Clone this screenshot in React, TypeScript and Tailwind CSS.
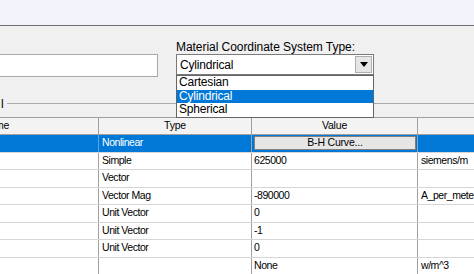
import React from "react";

const rows = [
  { type: "Nonlinear", value: "", unit: "", selected: true },
  { type: "Simple", value: "625000", unit: "siemens/m" },
  { type: "Vector", value: "", unit: "" },
  { type: "Vector Mag", value: "-890000", unit: "A_per_meter" },
  { type: "Unit Vector", value: "0", unit: "" },
  { type: "Unit Vector", value: "-1", unit: "" },
  { type: "Unit Vector", value: "0", unit: "" },
  { type: "", value: "None", unit: "w/m^3" },
];

export default function App() {
  return (
    <div
      className="w-[474px] h-[274px] overflow-hidden bg-[#f0f0f0] flex flex-col text-black"
      style={{ fontFamily: '"Liberation Sans", Arial, sans-serif' }}
    >
      {/* top band */}
      <div className="h-[25px] shrink-0 bg-[#f1f4fb]" />
      <div className="h-[2px] shrink-0 border-t border-[#6f6f6f] border-b-[#b4b4b4]" />

      {/* middle form area */}
      <div className="h-[90px] shrink-0 flex flex-col">
        <div className="h-[50px] flex">
          <div className="mt-[27px] w-[158px] h-[23px] bg-white border border-[#a8a8a8] border-l-0" />
          <div className="ml-[18px] flex flex-col">
            <div className="mt-[13px] h-[14px] leading-[14px] text-[12px] whitespace-nowrap tracking-[-0.05px]">
              Material Coordinate System Type:
            </div>
            <div className="relative">
              <div className="w-[198px] h-[21px] bg-white border border-[#7a7a7a] flex items-center">
                <span className="flex-1 pl-[3px] text-[12px] leading-[14px] tracking-[-0.2px]">Cylindrical</span>
                <div className="w-[17px] h-[17px] mr-[1px] bg-[#e6e6e6] border border-[#adadad] flex items-center justify-center">
                  <svg width="8" height="5" viewBox="0 0 8 5">
                    <path d="M0 0H8L4 5Z" fill="#000" />
                  </svg>
                </div>
              </div>
              <div className="absolute left-0 top-full w-[198px] bg-white border border-[#646464] z-10 text-[12px] leading-[13.5px] tracking-[-0.2px]">
                <div className="h-[13.5px] pl-[2px]">Cartesian</div>
                <div className="h-[13.5px] pl-[2px] bg-[#0078d7] text-white">Cylindrical</div>
                <div className="h-[13.5px] pl-[2px]">Spherical</div>
              </div>
            </div>
          </div>
        </div>
        <div className="mt-[20px] h-[14px] flex items-center">
          <span className="pl-[1px] text-[12px] leading-[14px]">l</span>
          <div className="flex-1 ml-[3px] h-[2px] border-t border-[#a9a9a9] border-b-white" />
        </div>
      </div>

      {/* table */}
      <div className="flex flex-col text-[10.5px]">
        <div className="h-[18px] grid grid-cols-[99px_153px_166px_1fr] bg-[#f3f3f3] border-t border-b border-[#a0a0a0] tracking-[-0.2px]">
          <div className="border-r border-[#a0a0a0] overflow-hidden flex items-center">
            <span className="ml-[-18px]">Name</span>
          </div>
          <div className="border-r border-[#a0a0a0] flex items-center justify-center">Type</div>
          <div className="border-r border-[#a0a0a0] flex items-center justify-center">Value</div>
          <div />
        </div>
        {rows.map((r, i) => (
          <div
            key={i}
            className={
              "h-[17.5px] shrink-0 grid grid-cols-[99px_153px_166px_1fr] border-b border-[#d6d6d6] tracking-[-0.45px] " +
              (r.selected ? "bg-[#0078d7] text-white" : "bg-white")
            }
          >
            <div className={r.selected ? "border-r border-[#5da3e3]" : "border-r border-[#a0a0a0]"} />
            <div className="pl-[3px] flex items-center whitespace-nowrap border-r border-[#a0a0a0]">
              {r.type}
            </div>
            <div className="pl-[2px] pr-[1px] flex items-center whitespace-nowrap border-r border-[#a0a0a0]">
              {r.selected ? (
                <div className="w-full h-[14px] bg-[#e6e6e6] border border-[#7f7f7f] text-black flex items-center justify-center tracking-[-0.2px]">
                  B-H Curve...
                </div>
              ) : (
                r.value
              )}
            </div>
            <div className="pl-[3px] flex items-center whitespace-nowrap overflow-hidden">{r.unit}</div>
          </div>
        ))}
      </div>
    </div>
  );
}
